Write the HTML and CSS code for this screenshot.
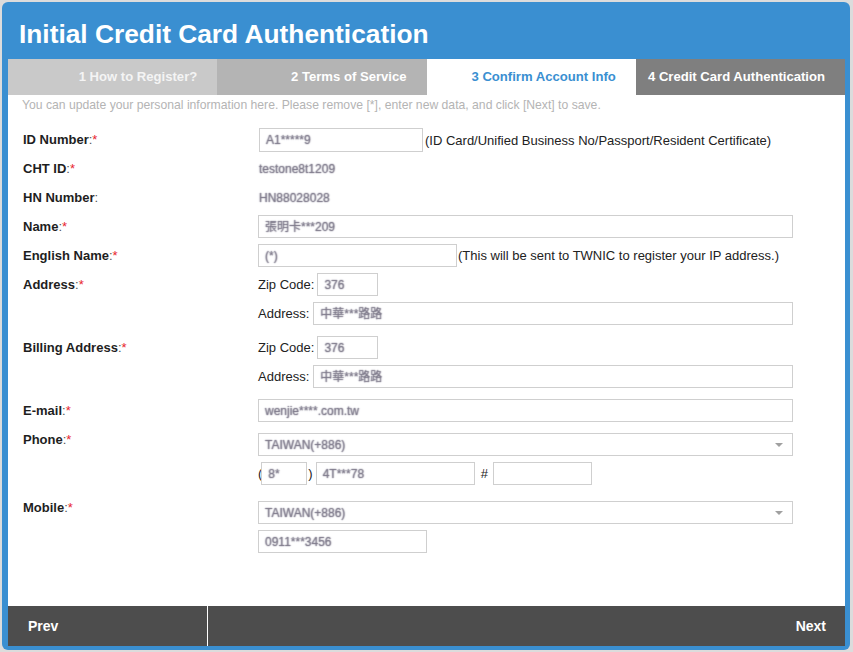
FILE: index.html
```html
<!DOCTYPE html>
<html>
<head>
<meta charset="utf-8">
<link rel="stylesheet" href="styles.css">
</head>
<body>
<div class="dialog">
  <div class="header">Initial Credit Card Authentication</div>
  <div class="panel">
    <div class="tabs">
      <div class="tab t1">1 How to Register?</div>
      <div class="tab t2">2 Terms of Service</div>
      <div class="tab t3">3 Confirm Account Info</div>
      <div class="tab t4">4 Credit Card Authentication</div>
    </div>
    <div class="info">You can update your personal information here. Please remove [*], enter new data, and click [Next] to save.</div>
    <div class="form">
      <div class="row r-id">
        <div class="label">ID Number<span class="colon">:</span><span class="req">*</span></div>
        <div class="field line">
          <div class="input w-id"><span class="val">A1*****9</span></div>
          <span class="note">(ID Card/Unified Business No/Passport/Resident Certificate)</span>
        </div>
      </div>
      <div class="row">
        <div class="label">CHT ID<span class="colon">:</span><span class="req">*</span></div>
        <div class="field line"><span class="val plain">testone8t1209</span></div>
      </div>
      <div class="row">
        <div class="label">HN Number<span class="colon">:</span></div>
        <div class="field line"><span class="val plain">HN88028028</span></div>
      </div>
      <div class="row">
        <div class="label">Name<span class="colon">:</span><span class="req">*</span></div>
        <div class="field"><div class="input full"><span class="val">張明卡***209</span></div></div>
      </div>
      <div class="row">
        <div class="label">English Name<span class="colon">:</span><span class="req">*</span></div>
        <div class="field line">
          <div class="input w-en"><span class="val">(*)</span></div>
          <span class="note">(This will be sent to TWNIC to register your IP address.)</span>
        </div>
      </div>
      <div class="row multi">
        <div class="label">Address<span class="colon">:</span><span class="req">*</span></div>
        <div class="field stack">
          <div class="line"><span class="sub">Zip Code:</span><div class="input w-zip"><span class="val">376</span></div></div>
          <div class="line"><span class="sub">Address:</span><div class="input grow"><span class="val">中華***路路</span></div></div>
        </div>
      </div>
      <div class="row multi">
        <div class="label">Billing Address<span class="colon">:</span><span class="req">*</span></div>
        <div class="field stack">
          <div class="line"><span class="sub">Zip Code:</span><div class="input w-zip"><span class="val">376</span></div></div>
          <div class="line"><span class="sub">Address:</span><div class="input grow"><span class="val">中華***路路</span></div></div>
        </div>
      </div>
      <div class="row">
        <div class="label">E-mail<span class="colon">:</span><span class="req">*</span></div>
        <div class="field"><div class="input full"><span class="val">wenjie****.com.tw</span></div></div>
      </div>
      <div class="row multi">
        <div class="label">Phone<span class="colon">:</span><span class="req">*</span></div>
        <div class="field stack">
          <div class="select"><span class="val">TAIWAN(+886)</span><span class="caret"></span></div>
          <div class="line">
            <span class="paren">(</span>
            <div class="input w-area"><span class="val">8*</span></div>
            <span class="paren">)</span>
            <div class="input w-num"><span class="val">4T***78</span></div>
            <span class="hash">#</span>
            <div class="input w-ext"></div>
          </div>
        </div>
      </div>
      <div class="row">
        <div class="label">Mobile<span class="colon">:</span><span class="req">*</span></div>
        <div class="field stack">
          <div class="select"><span class="val">TAIWAN(+886)</span><span class="caret"></span></div>
          <div class="line"><div class="input w-mob"><span class="val">0911***3456</span></div></div>
        </div>
      </div>
    </div>
    <div class="footer">
      <div class="btn prev">Prev</div>
      <div class="btn next">Next</div>
    </div>
  </div>
</div>
</body>
</html>
```
FILE: styles.css
```css
* { box-sizing: border-box; }
html, body { margin: 0; padding: 0; }
body {
  background: #dcdcdc;
  font-family: "Liberation Sans", Arial, sans-serif;
  width: 853px;
  height: 652px;
  overflow: hidden;
}
.dialog {
  margin: 2px 0 0 2px;
  width: 848px;
  height: 648px;
  background: #3a8fd1;
  border-radius: 6px;
  padding: 0 5px 4px 6px;
  display: flex;
  flex-direction: column;
}
.header {
  height: 57px;
  padding: 17px 0 0 11px;
  color: #fff;
  font-size: 26.3px;
  font-weight: bold;
  line-height: 30px;
  flex: none;
}
.panel {
  flex: 1;
  background: #fff;
  display: flex;
  flex-direction: column;
}
.tabs {
  display: flex;
  height: 36px;
  flex: none;
}
.tab {
  flex: 1;
  text-align: right;
  padding-right: 20px;
  line-height: 36px;
  font-size: 13.1px;
  font-weight: bold;
  color: #fff;
}
.t1 { background: #c9c9c9; color: #f4f4f4; }
.t2 { background: #b4b4b4; }
.t3 { background: #fff; color: #3a8fd1; }
.t4 { background: #7f7f7f; }
.info {
  padding: 2px 0 0 14px;
  font-size: 12.2px;
  line-height: 16px;
  color: #b4b4b4;
  height: 33px;
  white-space: nowrap;
}
.form {
  flex: 1;
  padding: 0 52px 0 15px;
}
.row {
  display: flex;
  margin-bottom: 6px;
}
.row.r-id { margin-bottom: 5px; }
.row.multi { margin-bottom: 11px; }
.label {
  width: 235px;
  flex: none;
  font-size: 13px;
  font-weight: bold;
  color: #1e1e1e;
  line-height: 23px;
}
.r-id .label { line-height: 24px; }
.colon { font-weight: normal; color: #555; }
.req { font-weight: normal; color: #e8252e; }
.field { flex: 1; min-width: 0; }
.line {
  display: flex;
  align-items: center;
  min-height: 23px;
}
.stack { display: flex; flex-direction: column; gap: 6px; }
.input {
  height: 23px;
  border: 1px solid #cfcfcf;
  background: #fff;
  display: flex;
  align-items: center;
  padding-left: 6px;
  flex: none;
}
.input.full { width: 100%; }
.input.grow { flex: 1; margin-left: 4px; }
.w-id { width: 164px; height: 24px; margin-left: 1px; margin-right: 2px; }
.w-en { width: 199px; margin-right: 1px; }
.w-zip { width: 61px; margin-left: 3px; }
.w-area { width: 46px; margin: 0 1px 0 -1px; }
.w-num { width: 159px; margin-left: 3px; }
.w-ext { width: 99px; }
.w-mob { width: 169px; }
.val {
  display: inline-block;
  font-size: 12px;
  line-height: 14px;
  color: transparent;
  text-shadow: 0 0 1.3px #7c7888, 0 0 1px #9793a3;
  white-space: nowrap;
  font-family: "Liberation Sans", "Noto Sans CJK TC", sans-serif;
}
.val.plain { padding-left: 1px; }
.note {
  font-size: 13px;
  color: #222;
  white-space: nowrap;
}
.sub {
  font-size: 13px;
  color: #222;
}
.paren { font-size: 13px; color: #222; }
.hash { font-size: 13px; color: #222; margin: 0 5px 0 6px; }
.select {
  margin-top: 5px;
  height: 23px;
  border: 1px solid #cfcfcf;
  display: flex;
  align-items: center;
  justify-content: space-between;
  padding: 0 9px 0 6px;
}
.caret {
  width: 0;
  height: 0;
  border-left: 4px solid transparent;
  border-right: 4px solid transparent;
  border-top: 4px solid #a0a0a0;
}
.footer {
  height: 40px;
  flex: none;
  background: #4d4d4d;
  display: flex;
}
.btn {
  font-size: 14px;
  font-weight: bold;
  color: #fff;
  line-height: 40px;
}
.prev {
  width: 200px;
  padding-left: 20px;
  border-right: 1px solid #fff;
}
.next {
  flex: 1;
  text-align: right;
  padding-right: 19px;
}
```
